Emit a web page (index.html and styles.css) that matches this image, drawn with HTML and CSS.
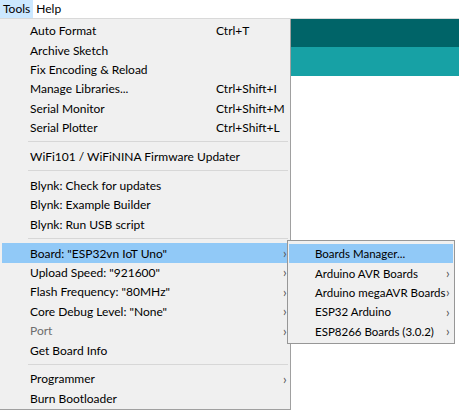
FILE: index.html
```html
<!DOCTYPE html>
<html lang="en">
<head>
    <meta charset="UTF-8">
    <title>Arduino - Tools menu</title>
    <link rel="stylesheet" href="styles.css">
</head>
<body>
    <div class="menubar">
        <span class="menubar-item active">Tools</span>
        <span class="menubar-item">Help</span>
    </div>

    <div class="workspace">
        <div class="menu">
            <div class="item"><span class="label">Auto Format</span><span class="key">Ctrl+T</span></div>
            <div class="item"><span class="label">Archive Sketch</span></div>
            <div class="item"><span class="label">Fix Encoding &amp; Reload</span></div>
            <div class="item"><span class="label">Manage Libraries...</span><span class="key">Ctrl+Shift+I</span></div>
            <div class="item"><span class="label">Serial Monitor</span><span class="key">Ctrl+Shift+M</span></div>
            <div class="item"><span class="label">Serial Plotter</span><span class="key">Ctrl+Shift+L</span></div>
            <div class="sep"></div>
            <div class="item"><span class="label">WiFi101 / WiFiNINA Firmware Updater</span></div>
            <div class="sep"></div>
            <div class="item"><span class="label">Blynk: Check for updates</span></div>
            <div class="item"><span class="label">Blynk: Example Builder</span></div>
            <div class="item"><span class="label">Blynk: Run USB script</span></div>
            <div class="sep"></div>
            <div class="item selected"><span class="label">Board: "ESP32vn IoT Uno"</span><span class="arrow">&rsaquo;</span></div>
            <div class="item"><span class="label">Upload Speed: "921600"</span><span class="arrow">&rsaquo;</span></div>
            <div class="item"><span class="label">Flash Frequency: "80MHz"</span><span class="arrow">&rsaquo;</span></div>
            <div class="item"><span class="label">Core Debug Level: "None"</span><span class="arrow">&rsaquo;</span></div>
            <div class="item disabled"><span class="label">Port</span><span class="arrow">&rsaquo;</span></div>
            <div class="item"><span class="label">Get Board Info</span></div>
            <div class="sep"></div>
            <div class="item"><span class="label">Programmer</span><span class="arrow">&rsaquo;</span></div>
            <div class="item"><span class="label">Burn Bootloader</span></div>
        </div>

        <div class="editor">
            <div class="toolbar"></div>
            <div class="tabs"></div>
        </div>

        <!-- board submenu, opened over the editor -->
        <div class="submenu">
            <div class="item selected"><span class="label">Boards Manager...</span></div>
            <div class="item"><span class="label">Arduino AVR Boards</span><span class="arrow">&rsaquo;</span></div>
            <div class="item"><span class="label">Arduino megaAVR Boards</span><span class="arrow">&rsaquo;</span></div>
            <div class="item"><span class="label">ESP32 Arduino</span><span class="arrow">&rsaquo;</span></div>
            <div class="item"><span class="label">ESP8266 Boards (3.0.2)</span><span class="arrow">&rsaquo;</span></div>
        </div>
    </div>
</body>
</html>
```

FILE: styles.css
```css
body {
    margin: 0;
    font-family: Lato, "Open Sans", sans-serif;
    font-size: 12px;
    color: #000;
    background: #fff;
}
.menubar {
    display: flex;
    height: 18px;
    border-bottom: 1px solid #d9d9d9;
}
.menubar-item {
    padding: 0 3px;
    line-height: 18px;
}
.menubar-item.active {
    background-color: #cce8ff;
}
.workspace {
    position: relative;
    display: flex;
}
.menu {
    width: 290px;
    padding: 2px 0 1px;
    background-color: #f0f0f0;
    border-right: 1px solid #a0a0a0;
    border-bottom: 1px solid #a0a0a0;
}
.item {
    display: flex;
    align-items: center;
    height: 19.4px;
    margin: 0 2px;
    position: relative;
}
.item .label {
    padding-left: 28px;
    flex: 1;
    white-space: nowrap;
}
.item .key {
    width: 72px;
}
.item .arrow {
    width: 5px;
    font-size: 13px;
    color: #555;
}
.item.selected {
    background-color: #91c9f7;
}
.item.disabled {
    color: #6d6d6d;
}
.sep {
    height: 1px;
    margin: 4px 2px 4.5px 28px;
    background-color: #d7d7d7;
}
.editor {
    flex: 1;
}
.toolbar {
    height: 28px;
    background-color: #006468;
}
.tabs {
    height: 29px;
    background-color: #17a1a5;
}
.submenu {
    position: absolute;
    left: 287px;
    top: 221px;
    width: 166px;
    padding: 3px 0 2px;
    background-color: #f0f0f0;
    border: 1px solid #979797;
}
.submenu .item {
    margin: 0 1px;
}
.submenu .item .label {
    padding-left: 26px;
    font-size: 11.5px;
}
.submenu .item .arrow {
    margin-right: 2px;
}
```
